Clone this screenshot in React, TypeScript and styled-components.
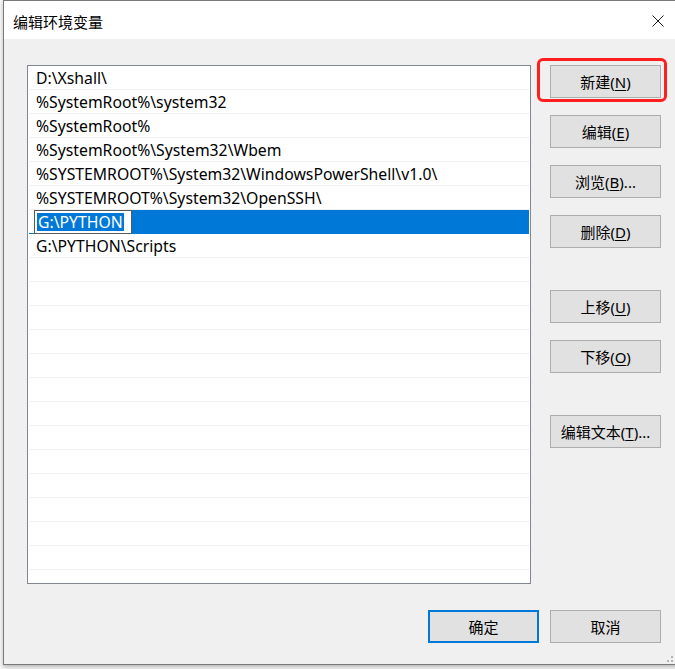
import React from 'react'
import styled, { createGlobalStyle } from 'styled-components'

const GlobalStyle = createGlobalStyle`
  html, body {
    margin: 0;
    padding: 0;
    background: #f4f4f4;
  }
  * {
    box-sizing: border-box;
  }
`

const Screen = styled.div`
  width: 675px;
  height: 669px;
  overflow: hidden;
  position: relative;
  background: #f6f6f6;
  padding-left: 3px;
  font-family: "Noto Sans", "Noto Sans CJK SC", sans-serif;
  color: #000;
`

const Dialog = styled.div`
  width: 700px;
  height: 665px;
  display: flex;
  flex-direction: column;
  border: 1px solid #7a7a7a;
  border-right: none;
  box-shadow: 0 2px 4px rgba(0, 0, 0, 0.25);
  position: relative;
`

const TitleBar = styled.div`
  height: 38px;
  flex-shrink: 0;
  background: #fff;
  display: flex;
  align-items: center;
  justify-content: space-between;
  padding: 2px 0 0 9px;
  width: 671px;
`

const Title = styled.span`
  font-family: "Noto Sans CJK SC", sans-serif;
  font-size: 15px;
`

const CloseIcon = styled.svg`
  width: 12px;
  height: 12px;
  margin-right: 11px;
`

const Body = styled.div`
  flex: 1;
  background: #f0f0f0;
  display: grid;
  grid-template-columns: 504px 111px;
  grid-template-rows: 519px auto;
  column-gap: 19px;
  align-content: start;
  padding: 26px 0 0 23px;
  position: relative;
`

const List = styled.div`
  border: 1px solid #828790;
  background: #fff;
  padding: 0 1px;
  overflow: hidden;
`

const Row = styled.div<{ $selected?: boolean }>`
  height: 24px;
  border-bottom: 1px solid ${p => (p.$selected ? '#0078d7' : '#f0f0f0')};
  padding-left: ${p => (p.$selected ? '5px' : '7px')};
  display: flex;
  align-items: center;
  font-size: 15.75px;
  white-space: nowrap;
  background: ${p =>
    p.$selected ? 'linear-gradient(to right, #fff 0, #fff 103px, #0078d7 103px)' : '#fff'};
`

const Editor = styled.div`
  height: 24px;
  width: 98px;
  margin-top: -1px;
  margin-bottom: -1px;
  border: 1px solid #5a5a5a;
  background: #fff;
  display: flex;
  align-items: center;
  padding-left: 2px;
`

const EditSelection = styled.span`
  background: #0078d7;
  color: #fff;
  line-height: 18px;
  padding: 0 1px;
`

const SideColumn = styled.div`
  display: flex;
  flex-direction: column;
  gap: 17px;
`

const Button = styled.button<{ $default?: boolean; $spaced?: boolean }>`
  width: 111px;
  height: 33px;
  margin: 0;
  margin-top: ${p => (p.$spaced ? '25px' : '0')};
  padding: 0;
  background: #e1e1e1;
  border: ${p => (p.$default ? '2px solid #0078d7' : '1px solid #adadad')};
  font-family: "Noto Sans", "Noto Sans CJK SC", sans-serif;
  font-size: 15px;
  color: #000;
  position: relative;
  display: flex;
  align-items: center;
  justify-content: center;
  u {
    text-underline-offset: 2px;
  }
`

const Highlight = styled.span`
  position: absolute;
  top: -8px;
  left: -14px;
  right: -7px;
  bottom: -5px;
  border: 3px solid #ff1f1f;
  border-radius: 6px;
  pointer-events: none;
`

const Footer = styled.div`
  grid-column: 1 / -1;
  display: flex;
  justify-content: flex-end;
  gap: 11px;
  margin-top: 26px;
`

const Grip = styled.svg`
  position: absolute;
  right: 25px;
  bottom: 1px;
  width: 11px;
  height: 11px;
`

const paths = [
  'D:\\Xshall\\',
  '%SystemRoot%\\system32',
  '%SystemRoot%',
  '%SystemRoot%\\System32\\Wbem',
  '%SYSTEMROOT%\\System32\\WindowsPowerShell\\v1.0\\',
  '%SYSTEMROOT%\\System32\\OpenSSH\\',
  'G:\\PYTHON',
  'G:\\PYTHON\\Scripts',
]

const rows = Array.from({ length: 22 }, (_, i) => paths[i] ?? '')

export default function App() {
  return (
    <Screen>
      <GlobalStyle />
      <Dialog>
        <TitleBar>
          <Title>编辑环境变量</Title>
          <CloseIcon viewBox="0 0 12 12">
            <path d="M0.5 0.5 L11.5 11.5 M11.5 0.5 L0.5 11.5" stroke="#000" strokeWidth="0.9" fill="none" />
          </CloseIcon>
        </TitleBar>
        <Body>
          <List>
            {rows.map((text, i) =>
              i === 6 ? (
                <Row key={i} $selected>
                  <Editor>
                    <EditSelection>{text}</EditSelection>
                  </Editor>
                </Row>
              ) : (
                <Row key={i}>{text}</Row>
              )
            )}
          </List>

          <SideColumn>
            <Button>
              新建(<u>N</u>)
              <Highlight />
            </Button>
            <Button>编辑(<u>E</u>)</Button>
            <Button>浏览(<u>B</u>)...</Button>
            <Button>删除(<u>D</u>)</Button>
            <Button $spaced>上移(<u>U</u>)</Button>
            <Button>下移(<u>O</u>)</Button>
            <Button $spaced>编辑文本(<u>T</u>)...</Button>
          </SideColumn>

          <Footer>
            <Button $default>确定</Button>
            <Button>取消</Button>
          </Footer>

          <Grip viewBox="0 0 11 11">
            <g fill="#b5b5b5">
              <rect x="8" y="0" width="2" height="2" />
              <rect x="4" y="4" width="2" height="2" />
              <rect x="8" y="4" width="2" height="2" />
              <rect x="0" y="8" width="2" height="2" />
              <rect x="4" y="8" width="2" height="2" />
              <rect x="8" y="8" width="2" height="2" />
            </g>
          </Grip>
        </Body>
      </Dialog>
    </Screen>
  )
}
